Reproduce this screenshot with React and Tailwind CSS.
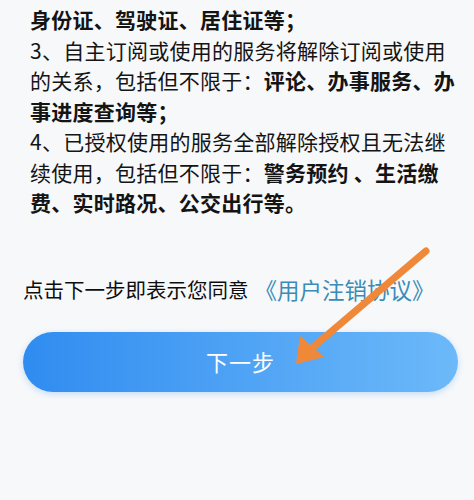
// App.jsx - pantalla de cancelación de cuenta (paso final)

const lines = [
  [{ t: '身份证、驾驶证、居住证等；', b: true }],
  [{ t: '3、自主订阅或使用的服务将解除订阅或使用' }],
  [{ t: '的关系，包括但不限于：' }, { t: '评论、办事服务、办', b: true }],
  [{ t: '事进度查询等；', b: true }],
  [{ t: '4、已授权使用的服务全部解除授权且无法继' }],
  [{ t: '续使用，包括但不限于：' }, { t: '警务预约 、生活缴', b: true }],
  [{ t: '费、实时路况、公交出行等。', b: true }],
];

const App = () => {
  return (
    <div
      className="relative w-[474px] h-[500px] overflow-hidden bg-[#f7f8fa] text-[#141414]"
      style={{ fontFamily: '"Noto Sans CJK SC", "Noto Sans", sans-serif' }}
    >
      {/* Texto de condiciones */}
      <div className="pl-[30px] pt-[4px] text-[21px] leading-[30.5px] tracking-[0.25px]">
        {lines.map((line, i) => (
          <div key={i} className="whitespace-nowrap">
            {line.map((s, j) => (
              <span key={j} className={s.b ? 'font-bold' : 'font-normal'}>
                {s.t}
              </span>
            ))}
          </div>
        ))}
      </div>

      {/* Aviso de acuerdo */}
      <div className="mt-[56px] pl-[23px] text-[20.5px] leading-[30px] whitespace-nowrap flex items-center text-[#0d0d0d]">
        <span>点击下一步即表示您同意</span>
        <span className="ml-[6px] text-[22.5px] text-[#3a8cb6]">《用户注销协议》</span>
      </div>

      {/* Botón */}
      <div className="mt-[28px] pl-[23px]">
        <button className="w-[435px] h-[60px] rounded-full bg-gradient-to-r from-[#2f8cf0] to-[#6cb9f9] text-white text-[22px] tracking-[1px] flex items-center justify-center shadow-[0_2px_6px_rgba(47,140,240,0.25)]">
          下一步
        </button>
      </div>

      {/* Flecha naranja encima */}
      <svg className="absolute left-0 top-0 pointer-events-none" width="474" height="500">
        <line x1="426" y1="251" x2="312" y2="348" stroke="#f0883a" strokeWidth="7" strokeLinecap="round" />
        <polygon points="296,364 300,336 324,357" fill="#f0883a" />
      </svg>
    </div>
  );
};

export default App;
